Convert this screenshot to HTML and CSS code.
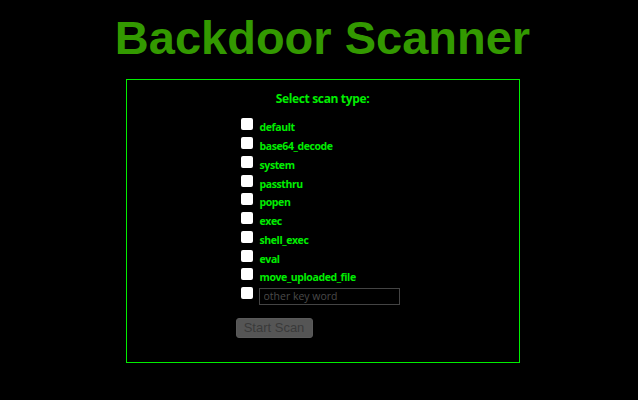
FILE: index.html
```html
<!DOCTYPE html>
<html>
<head>
<meta charset="utf-8">
<link rel="stylesheet" href="styles.css">
</head>
<body>
<div class="page">
  <h1 class="title">Backdoor Scanner</h1>
  <form class="panel">
    <div class="heading">Select scan type:</div>
    <div class="options">
      <label class="row"><input type="checkbox" class="cb"><span>default</span></label>
      <label class="row"><input type="checkbox" class="cb"><span>base64_decode</span></label>
      <label class="row"><input type="checkbox" class="cb"><span>system</span></label>
      <label class="row"><input type="checkbox" class="cb"><span>passthru</span></label>
      <label class="row"><input type="checkbox" class="cb"><span>popen</span></label>
      <label class="row"><input type="checkbox" class="cb"><span>exec</span></label>
      <label class="row"><input type="checkbox" class="cb"><span>shell_exec</span></label>
      <label class="row"><input type="checkbox" class="cb"><span>eval</span></label>
      <label class="row"><input type="checkbox" class="cb"><span>move_uploaded_file</span></label>
      <div class="row"><input type="checkbox" class="cb cb-kw"><input type="text" class="kw" placeholder="other key word"></div>
      <div class="actions"><button type="button" class="btn" disabled>Start Scan</button></div>
    </div>
  </form>
</div>
</body>
</html>
```

FILE: styles.css
```css
html, body {
  margin: 0;
  padding: 0;
  background: #000;
}
.page {
  width: 638px;
  height: 400px;
  padding-left: 7px;
  box-sizing: border-box;
  display: flex;
  flex-direction: column;
  align-items: center;
}
.title {
  margin: 11px 0 0 0;
  font-family: "Liberation Sans", Arial, sans-serif;
  font-weight: bold;
  font-size: 47px;
  line-height: 54px;
  color: #339900;
}
.panel {
  margin: 14px 0 0 0;
  width: 394px;
  height: 284px;
  box-sizing: border-box;
  border: 1px solid #00ee00;
  display: flex;
  flex-direction: column;
}
.heading {
  text-align: center;
  margin-top: 12px;
  font-family: "Open Sans", sans-serif;
  font-weight: bold;
  font-size: 12px;
  letter-spacing: -0.35px;
  line-height: 14px;
  color: #00ee00;
}
.options {
  margin-top: 12px;
  padding-left: 109px;
  display: flex;
  flex-direction: column;
}
.row {
  display: flex;
  align-items: center;
  height: 18.75px;
  font-family: "Open Sans", sans-serif;
  font-weight: bold;
  font-size: 10.5px;
  letter-spacing: -0.4px;
  color: #00ee00;
}
.cb {
  appearance: none;
  -webkit-appearance: none;
  width: 12px;
  height: 12px;
  margin: 0 7px 0 5px;
  background: #fff;
  border-radius: 2px;
  position: relative;
  top: -3px;
}
.cb-kw {
  margin-right: 6px;
}
.kw {
  width: 141px;
  height: 17px;
  box-sizing: border-box;
  margin: 0;
  padding: 0 0 0 4px;
  background: #000;
  border: 1px solid #444;
  color: #aaa;
  font-family: "Open Sans", sans-serif;
  font-size: 10.5px;
  letter-spacing: 0;
  outline: none;
}
.kw::placeholder {
  color: #4a4a4a;
}
.actions {
  margin-top: 12px;
}
.btn {
  width: 77px;
  height: 20px;
  margin: 0;
  padding: 0;
  background: #555;
  border: 1px solid #5a5a5a;
  border-radius: 3px;
  color: #3a3a3a;
  font-family: "Liberation Sans", Arial, sans-serif;
  font-size: 13px;
}
```
